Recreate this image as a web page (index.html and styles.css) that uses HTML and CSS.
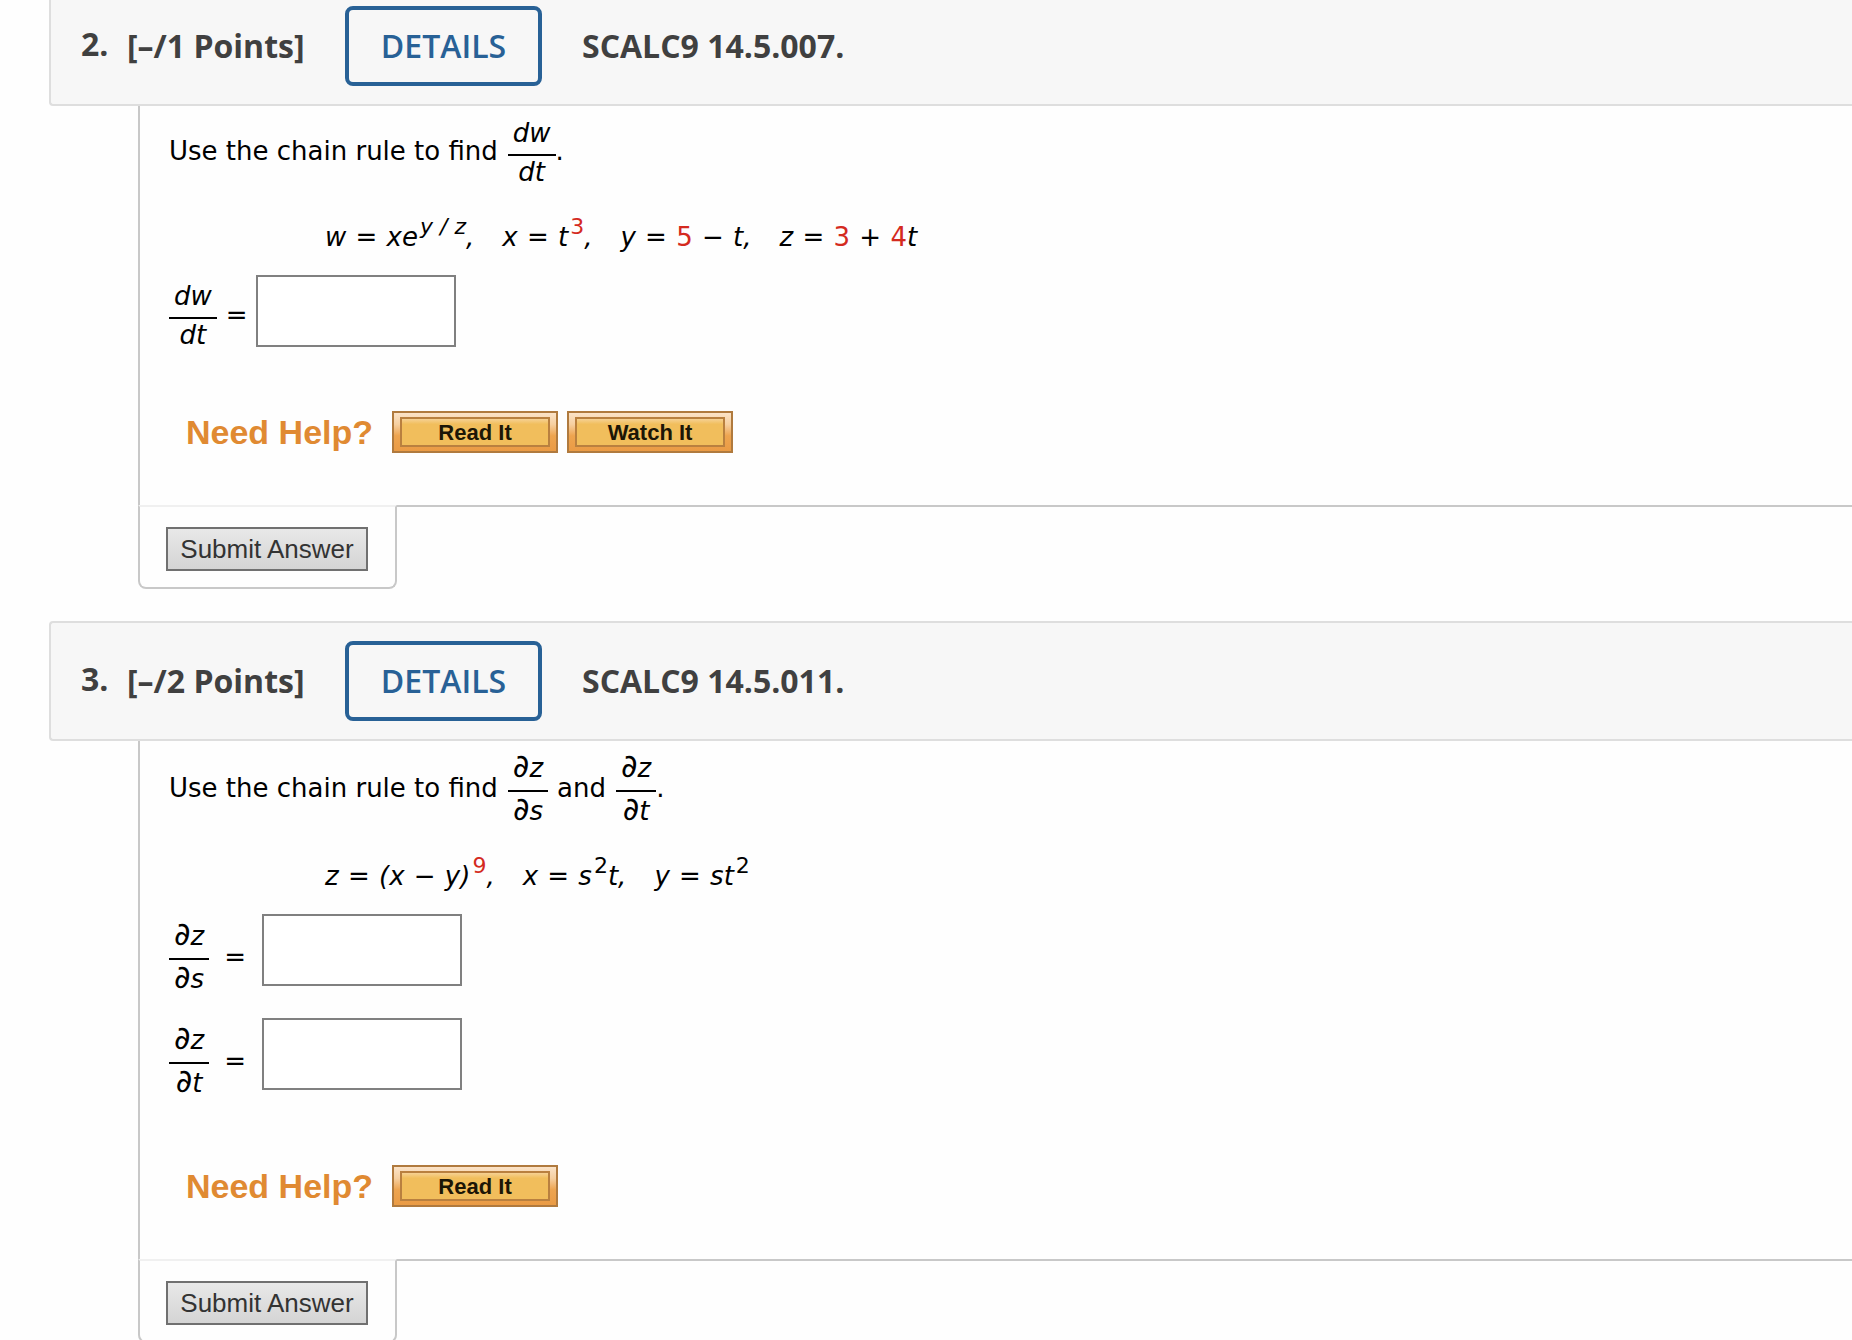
FILE: index.html
```
<!DOCTYPE html>
<html lang="en">
<head>
    <meta charset="UTF-8">
    <meta name="viewport" content="width=device-width, initial-scale=1.0">
    <title>Homework 14.5</title>
    <link rel="stylesheet" href="styles.css">
</head>

<body>
    <section class="question">
        <header class="question-header">
            <span class="number">2.</span>
            <span class="points">[–/1 Points]</span>
            <button type="button" class="details">DETAILS</button>
            <h2>SCALC9 14.5.007.</h2>
        </header>
        <form>
            <div class="content">
                <div class="prompt">
                    <span class="text">Use the chain rule to find</span>
                    <span class="fraction"><i>dw</i><i>dt</i></span>
                    <span class="text">.</span>
                </div>
                <div class="equations">
                    <span><i>w</i> <span class="op">=</span> <i>xe</i><sup class="power"><i>y</i><i>/</i><i>z</i></sup><i>,</i></span>
                    <span><i>x</i> <span class="op">=</span> <i>t</i><sup class="red">3</sup><i>,</i></span>
                    <span><i>y</i> <span class="op">=</span> <b>5</b> <span class="op">−</span> <i>t,</i></span>
                    <span><i>z</i> <span class="op">=</span> <b>3</b> <span class="op">+</span> <b>4</b><i>t</i></span>
                </div>
                <div class="answers">
                    <div class="answer">
                        <label for="dwdt"><span class="fraction"><i>dw</i><i>dt</i></span><span>=</span></label>
                        <input type="text" id="dwdt" name="dwdt">
                    </div>
                </div>
                <div class="help">
                    <strong>Need Help?</strong>
                    <button type="button"><span>Read It</span></button>
                    <button type="button"><span>Watch It</span></button>
                </div>
            </div>
            <div class="footer">
                <div class="submit-tab">
                    <button type="submit">Submit Answer</button>
                </div>
                <div class="footer-line"></div>
            </div>
        </form>
    </section>

    <section class="question">
        <header class="question-header">
            <span class="number">3.</span>
            <span class="points">[–/2 Points]</span>
            <button type="button" class="details">DETAILS</button>
            <h2>SCALC9 14.5.011.</h2>
        </header>
        <form>
            <div class="content partial">
                <div class="prompt">
                    <span class="text">Use the chain rule to find</span>
                    <span class="fraction"><i><span class="del">∂</span>z</i><i><span class="del">∂</span>s</i></span>
                    <span class="text and">and</span>
                    <span class="fraction"><i><span class="del">∂</span>z</i><i><span class="del">∂</span>t</i></span>
                    <span class="text">.</span>
                </div>
                <div class="equations">
                    <span><i>z</i> <span class="op">=</span> <i>(x</i> <span class="op">−</span> <i>y)</i><sup class="red">9</sup><i>,</i></span>
                    <span><i>x</i> <span class="op">=</span> <i>s</i><sup>2</sup><i>t,</i></span>
                    <span><i>y</i> <span class="op">=</span> <i>st</i><sup>2</sup></span>
                </div>
                <div class="answers">
                    <div class="answer">
                        <label for="dzds"><span class="fraction"><i><span class="del">∂</span>z</i><i><span class="del">∂</span>s</i></span><span>=</span></label>
                        <input type="text" id="dzds" name="dzds">
                    </div>
                    <div class="answer">
                        <label for="dzdt"><span class="fraction"><i><span class="del">∂</span>z</i><i><span class="del">∂</span>t</i></span><span>=</span></label>
                        <input type="text" id="dzdt" name="dzdt">
                    </div>
                </div>
                <div class="help">
                    <strong>Need Help?</strong>
                    <button type="button"><span>Read It</span></button>
                </div>
            </div>
            <div class="footer">
                <div class="submit-tab">
                    <button type="submit">Submit Answer</button>
                </div>
                <div class="footer-line"></div>
            </div>
        </form>
    </section>
</body>
</html>
```

FILE: styles.css
```
* {
    box-sizing: border-box;
}

body {
    margin: 0;
    height: 100vh;
    overflow: hidden;
    background-color: #fefefe;
    color: #000;
    font-family: Verdana, "DejaVu Sans", sans-serif;
    font-size: 26px;
    line-height: 32px;
}

.question {
    margin-left: 49px;
    margin-bottom: 32px;
}

/* header bar */
.question-header {
    display: flex;
    align-items: center;
    padding: 18px 0 18px 30px;
    background-color: #f7f7f7;
    border: 2px solid #dedede;
    border-right: none;
    border-radius: 4px 0 0 4px;
    color: #404040;
    font-family: "Open Sans", sans-serif;
    font-size: 32px;
    font-weight: bold;
}

.question:first-child .question-header {
    padding-top: 6px;
    border-top: none;
    border-top-left-radius: 0;
}

.number {
    width: 46px;
    padding-bottom: 4px;
}

.points {
    width: 218px;
}

.details {
    width: 197px;
    height: 80px;
    padding: 0 0 2px;
    background-color: transparent;
    border: 4px solid #286196;
    border-radius: 8px;
    color: #286196;
    font-family: inherit;
    font-size: 32px;
    font-weight: 600;
    cursor: pointer;
}

h2 {
    margin: 0 0 0 40px;
    font-size: 32px;
}

/* question body */
form {
    margin-left: 89px;
}

.content {
    padding: 11px 0 52px 29px;
    border-left: 2px solid #c8c8c8;
}

.prompt {
    display: flex;
    align-items: center;
}

.text {
    padding-bottom: 4px;
}

.prompt .fraction {
    margin-left: 10px;
}

.and {
    margin-left: 9px;
}

.fraction {
    display: inline-flex;
    flex-direction: column;
    text-align: center;
}

.fraction i {
    padding: 0 5px;
}

.fraction i:first-child {
    padding-bottom: 5px;
    border-bottom: 2px solid #000;
}

.partial .fraction i:first-child {
    padding-bottom: 6px;
}

.partial .fraction i:last-child {
    padding-top: 3px;
}

.del {
    font-size: 32px;
    font-style: normal;
    line-height: 0;
}

.equations {
    display: flex;
    gap: 28px;
    margin: 33px 0 22px 156px;
}

.op {
    margin: 0 1px;
}

sup {
    margin-left: 2px;
    font-size: 22px;
    line-height: 0;
    vertical-align: 12px;
}

.power {
    display: inline-flex;
    gap: 7px;
}

.red,
b {
    color: #d42a1e;
    font-weight: normal;
}

.answer {
    display: flex;
    align-items: center;
    margin-bottom: 24px;
}

.answer label {
    display: flex;
    align-items: center;
    width: 87px;
}

.answer label > span:last-child {
    margin-left: 9px;
}

.answer input {
    width: 200px;
    height: 72px;
    margin-bottom: 8px;
    padding: 4px 8px;
    background-color: #fff;
    border: 2px solid #808080;
    font: inherit;
}

.partial .answer {
    margin-bottom: 18px;
}

.partial .answer label {
    width: 93px;
}

.partial .answer label > span:last-child {
    margin-left: 15px;
}

.partial .answer input {
    margin-bottom: 14px;
}

/* help links */
.help {
    display: flex;
    align-items: center;
    gap: 9px;
    margin: 56px 0 0 17px;
}

.partial .help {
    margin-top: 61px;
}

.help strong {
    margin-right: 10px;
    color: #e08a32;
    font-family: Arial, "Liberation Sans", sans-serif;
    font-size: 34px;
}

.help button {
    width: 166px;
    height: 42px;
    padding: 4px 6px;
    background: linear-gradient(to bottom, #fbe3c8, #f6cfa0 30%, #eea44f 60%, #ea9b45);
    border: 2px solid #b07a3e;
    cursor: pointer;
}

.help button span {
    display: block;
    padding-top: 2px;
    background: linear-gradient(to bottom, #f6d193, #f1be5c 20%);
    border: 2px solid #b9803f;
    color: #1c1606;
    font-family: Arial, "Liberation Sans", sans-serif;
    font-size: 22px;
    font-weight: bold;
    line-height: 24px;
}

/* submit tab */
.footer {
    display: flex;
}

.submit-tab {
    width: 259px;
    padding: 20px 26px 16px;
    border: 2px solid #c8c8c8;
    border-top-color: #f0f0f0;
    border-radius: 0 0 8px 8px;
}

.footer-line {
    flex: 1;
    border-top: 2px solid #c8c8c8;
}

.submit-tab button {
    display: block;
    width: 202px;
    height: 44px;
    padding: 0;
    background: linear-gradient(to bottom, #e8e8e8, #d4d4d4);
    border: 2px solid #707070;
    color: #333;
    font-family: Arial, "Liberation Sans", sans-serif;
    font-size: 26px;
    cursor: pointer;
}
```
